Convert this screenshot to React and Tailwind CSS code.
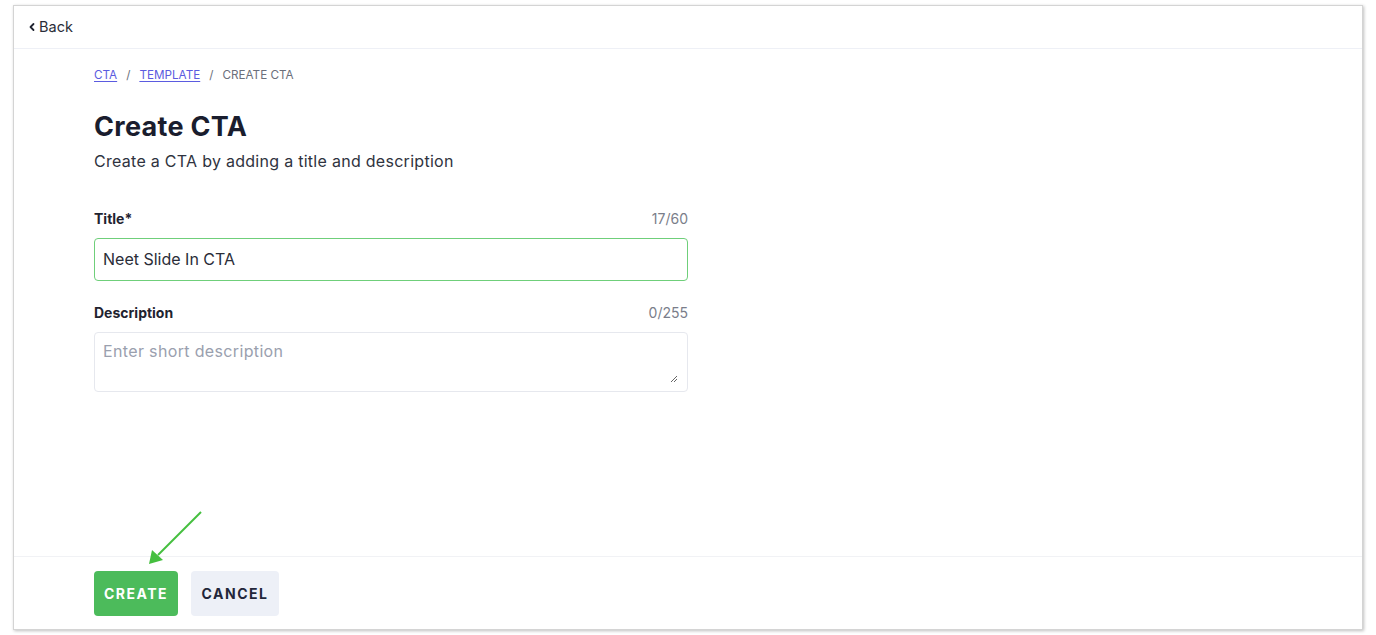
import React from "react";

export default function App() {
  return (
    <div className="relative w-[1376px] h-[635px] bg-white overflow-hidden" style={{ fontFamily: "Inter, 'Noto Sans', sans-serif" }}>
      <div className="absolute left-[13px] top-[5px] w-[1350px] h-[625px] bg-white border border-[#d4d4d4] shadow-[1px_1px_3px_rgba(0,0,0,0.25)] flex flex-col">
        <div className="h-[43px] flex items-center pl-[13px] border-b border-[#eef0f6] shrink-0">
          <svg width="10" height="10" viewBox="0 0 10 10" className="mr-[2px]">
            <path d="M6.5 2 L3.5 5 L6.5 8" fill="none" stroke="#1f2330" strokeWidth="1.8" strokeLinecap="round" strokeLinejoin="round" />
          </svg>
          <span className="text-[14.5px] text-[#2a2d38]">Back</span>
        </div>
        <div className="flex-1 pl-[80px] pt-[21px]">
          <div className="flex items-center gap-[9px] text-[11.7px] text-[#6b6f7b] leading-none">
            <span className="text-[#5b5be0] underline underline-offset-2">CTA</span>
            <span>/</span>
            <span className="text-[#5b5be0] underline underline-offset-2">TEMPLATE</span>
            <span>/</span>
            <span>CREATE CTA</span>
          </div>
          <h1 className="mt-[29px] text-[27px] font-bold text-[#1a1d2e] leading-[32px] tracking-[0.3px]">Create CTA</h1>
          <p className="mt-[7px] text-[16px] text-[#2f3340] leading-[22px] tracking-[0.28px]">Create a CTA by adding a title and description</p>
          <div className="w-[594px] mt-[38px]">
            <div className="flex justify-between items-center text-[14px] leading-[18px]">
              <span className="font-bold text-[#1f2330]">Title*</span>
              <span className="text-[#7a7e8a]">17/60</span>
            </div>
            <div className="mt-[10px] h-[43px] border border-[#6fcf7a] rounded-[4px] flex items-center px-[8px] text-[16px] text-[#2a2d38]">
              Neet Slide In CTA
            </div>
            <div className="mt-[23px] flex justify-between items-center text-[14px] leading-[18px]">
              <span className="font-bold text-[#1f2330]">Description</span>
              <span className="text-[#7a7e8a]">0/255</span>
            </div>
            <div className="relative mt-[10px] h-[60px] border border-[#e6e8ee] rounded-[4px] px-[8px] pt-[8px] text-[16px] text-[#9aa0ae] leading-[20px] tracking-[0.35px]">
              Enter short description
              <svg width="8" height="8" viewBox="0 0 8 8" className="absolute right-[9px] bottom-[8px]">
                <path d="M1 7 L7 1 M4 7 L7 4" stroke="#666" strokeWidth="1" />
              </svg>
            </div>
          </div>
        </div>
        <div className="h-[73px] border-t border-[#f1f2f5] flex items-center gap-[13px] pl-[80px] shrink-0">
          <div className="w-[84px] h-[45px] rounded-[4px] bg-[#4cbb5b] text-white text-[14px] font-bold tracking-[1.5px] flex items-center justify-center">CREATE</div>
          <div className="w-[88px] h-[45px] rounded-[4px] bg-[#edf0f7] text-[#22263a] text-[14px] font-bold tracking-[1.5px] flex items-center justify-center">CANCEL</div>
        </div>
      </div>
      <svg className="absolute left-0 top-0 pointer-events-none" width="1376" height="635">
        <line x1="201" y1="512" x2="158" y2="555" stroke="#45bf3f" strokeWidth="2" />
        <polygon points="149,564 152,550 163,560" fill="#45bf3f" />
      </svg>
    </div>
  );
}
